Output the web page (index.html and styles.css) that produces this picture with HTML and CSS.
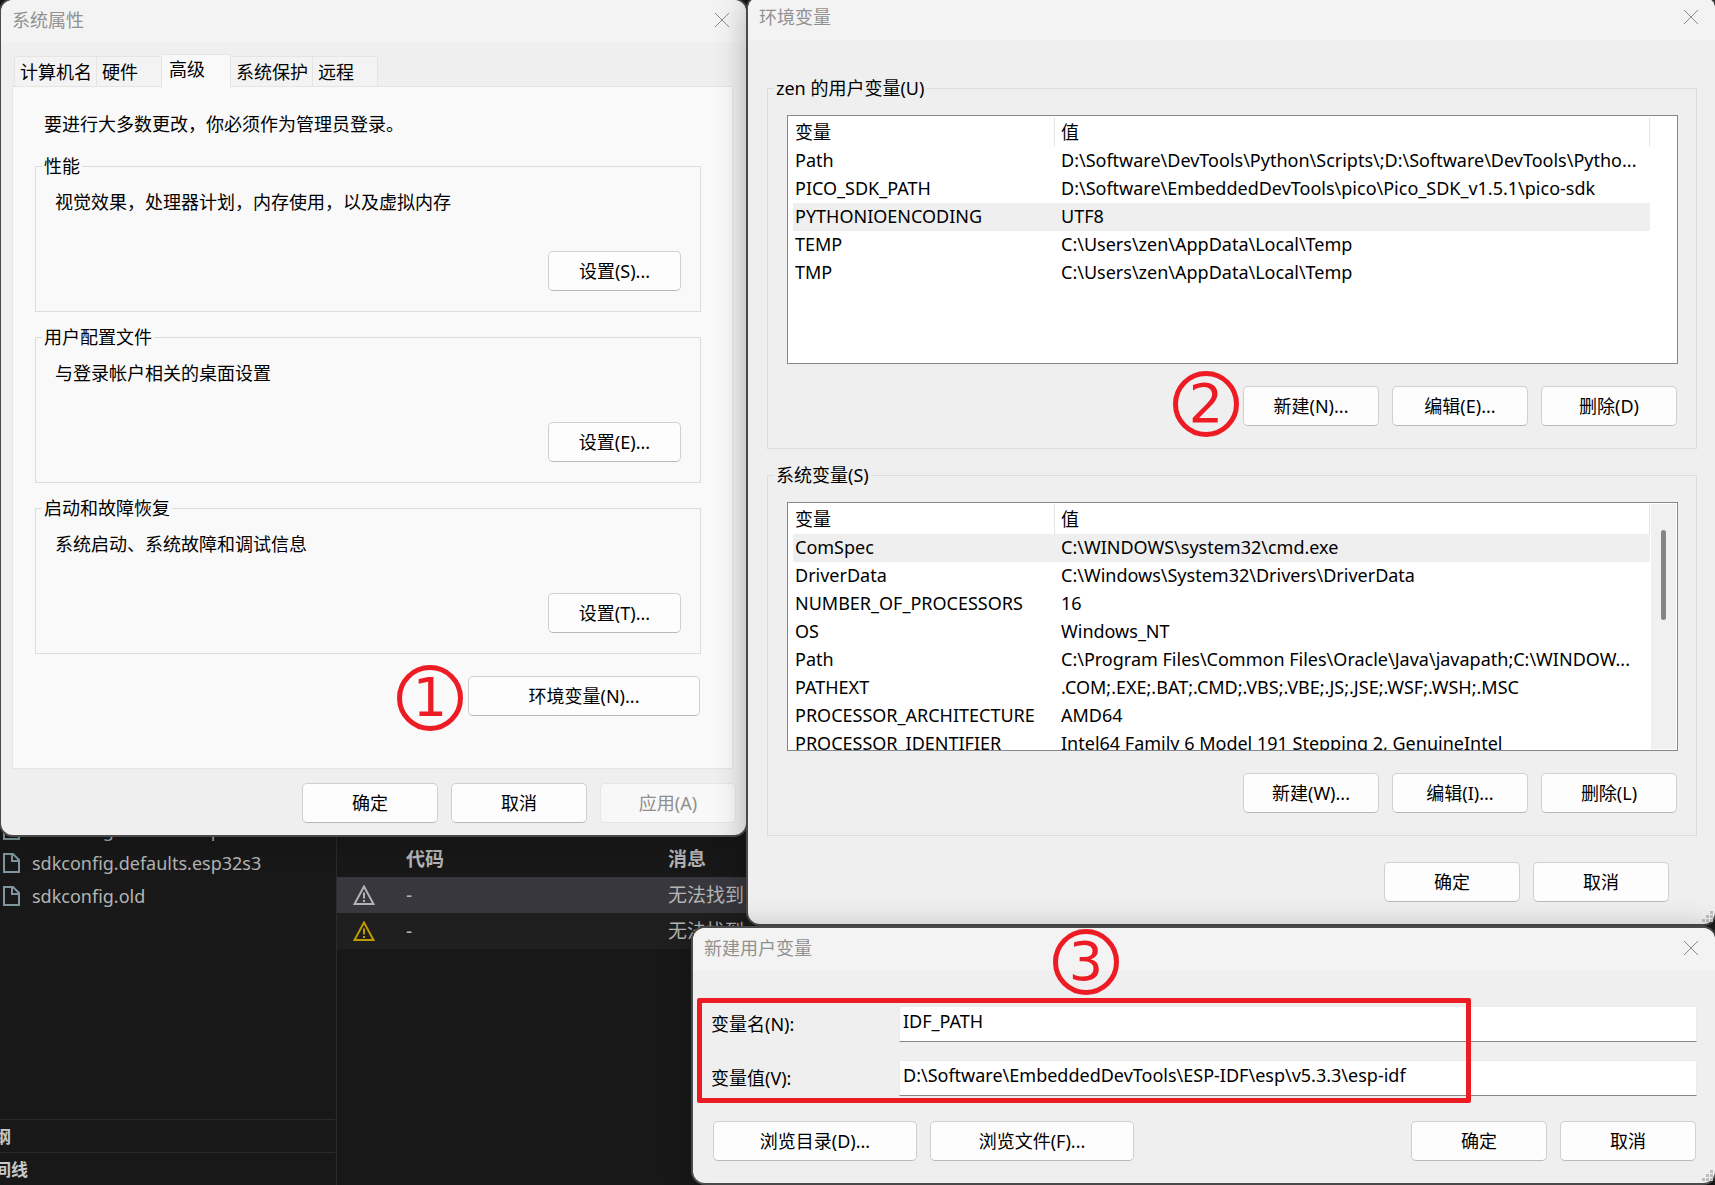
FILE: index.html
```
<!DOCTYPE html>
<html lang="zh-CN">
<head>
  <meta charset="UTF-8">
  <title>环境变量</title>
  <link rel="stylesheet" href="styles.css">
</head>
<body>
  <!-- 编辑器 -->
  <div class="editor">
    <div class="sidebar">
      <ul class="file-list">
        <li>
          <svg class="file-icon" viewBox="0 0 18 22"><path d="M2 2h9l6 6v12h-15zM10 2v7h7" /></svg>
          <span>sdkconfig.defaults.esp32s2</span>
        </li>
        <li>
          <svg class="file-icon" viewBox="0 0 18 22"><path d="M2 2h9l6 6v12h-15zM10 2v7h7" /></svg>
          <span>sdkconfig.defaults.esp32s3</span>
        </li>
        <li>
          <svg class="file-icon" viewBox="0 0 18 22"><path d="M2 2h9l6 6v12h-15zM10 2v7h7" /></svg>
          <span>sdkconfig.old</span>
        </li>
      </ul>
      <div class="section-title">大纲</div>
      <div class="section-title">时间线</div>
    </div>
    <div class="problems">
      <div class="problem-row problem-head">
        <span></span>
        <span>代码</span>
        <span>消息</span>
      </div>
      <div class="problem-row problem-active">
        <svg class="warn-icon" viewBox="0 0 22 20"><path d="M11 1.500L20.500 19h-19zM11 7.500v6M11 15v2" /></svg>
        <span>-</span>
        <span>无法找到</span>
      </div>
      <div class="problem-row problem-warn">
        <svg class="warn-icon" viewBox="0 0 22 20"><path d="M11 1.500L20.500 19h-19zM11 7.500v6M11 15v2" /></svg>
        <span>-</span>
        <span>无法找到</span>
      </div>
    </div>
  </div>

  <!-- 系统属性 -->
  <div class="window window-props">
    <div class="titlebar">
      <span>系统属性</span>
      <button class="close" aria-label="关闭"><svg viewBox="0 0 16 16"><path d="M1 1l14 14M15 1L1 15" /></svg></button>
    </div>
    <div class="tabs">
      <button class="tab">计算机名</button>
      <button class="tab">硬件</button>
      <button class="tab tab-active">高级</button>
      <button class="tab">系统保护</button>
      <button class="tab">远程</button>
    </div>
    <div class="tab-panel">
      <p class="tip">要进行大多数更改，你必须作为管理员登录。</p>
      <fieldset class="group setting">
        <legend>性能</legend>
        <p>视觉效果，处理器计划，内存使用，以及虚拟内存</p>
        <button class="btn btn-set">设置(S)...</button>
      </fieldset>
      <fieldset class="group setting">
        <legend>用户配置文件</legend>
        <p>与登录帐户相关的桌面设置</p>
        <button class="btn btn-set">设置(E)...</button>
      </fieldset>
      <fieldset class="group setting">
        <legend>启动和故障恢复</legend>
        <p>系统启动、系统故障和调试信息</p>
        <button class="btn btn-set">设置(T)...</button>
      </fieldset>
      <button class="btn btn-env">环境变量(N)...</button>
    </div>
    <div class="btn-row props-footer">
      <button class="btn">确定</button>
      <button class="btn">取消</button>
      <button class="btn" disabled>应用(A)</button>
    </div>
    <div class="badge badge-1">1</div>
  </div>

  <!-- 环境变量 -->
  <div class="window window-env">
    <div class="titlebar">
      <span>环境变量</span>
      <button class="close" aria-label="关闭"><svg viewBox="0 0 16 16"><path d="M1 1l14 14M15 1L1 15" /></svg></button>
    </div>
    <div class="env-body">
      <fieldset class="group vars">
        <legend>zen 的用户变量(U)</legend>
        <div class="list">
          <table>
            <thead>
              <tr><th class="col-name">变量</th><th>值</th></tr>
            </thead>
            <tbody>
              <tr><td>Path</td><td>D:\Software\DevTools\Python\Scripts\;D:\Software\DevTools\Pytho...</td></tr>
              <tr><td>PICO_SDK_PATH</td><td>D:\Software\EmbeddedDevTools\pico\Pico_SDK_v1.5.1\pico-sdk</td></tr>
              <tr class="selected"><td>PYTHONIOENCODING</td><td>UTF8</td></tr>
              <tr><td>TEMP</td><td>C:\Users\zen\AppData\Local\Temp</td></tr>
              <tr><td>TMP</td><td>C:\Users\zen\AppData\Local\Temp</td></tr>
            </tbody>
          </table>
        </div>
        <div class="btn-row">
          <button class="btn">新建(N)...</button>
          <button class="btn">编辑(E)...</button>
          <button class="btn">删除(D)</button>
        </div>
      </fieldset>
      <fieldset class="group vars">
        <legend>系统变量(S)</legend>
        <div class="list">
          <table>
            <thead>
              <tr><th class="col-name">变量</th><th>值</th></tr>
            </thead>
            <tbody>
              <tr class="selected"><td>ComSpec</td><td>C:\WINDOWS\system32\cmd.exe</td></tr>
              <tr><td>DriverData</td><td>C:\Windows\System32\Drivers\DriverData</td></tr>
              <tr><td>NUMBER_OF_PROCESSORS</td><td>16</td></tr>
              <tr><td>OS</td><td>Windows_NT</td></tr>
              <tr><td>Path</td><td>C:\Program Files\Common Files\Oracle\Java\javapath;C:\WINDOW...</td></tr>
              <tr><td>PATHEXT</td><td>.COM;.EXE;.BAT;.CMD;.VBS;.VBE;.JS;.JSE;.WSF;.WSH;.MSC</td></tr>
              <tr><td>PROCESSOR_ARCHITECTURE</td><td>AMD64</td></tr>
              <tr><td>PROCESSOR_IDENTIFIER</td><td>Intel64 Family 6 Model 191 Stepping 2, GenuineIntel</td></tr>
            </tbody>
          </table>
          <div class="scrollbar"><div class="thumb"></div></div>
        </div>
        <div class="btn-row">
          <button class="btn">新建(W)...</button>
          <button class="btn">编辑(I)...</button>
          <button class="btn">删除(L)</button>
        </div>
      </fieldset>
      <div class="btn-row env-footer">
        <button class="btn">确定</button>
        <button class="btn">取消</button>
      </div>
    </div>
    <svg class="grip" viewBox="0 0 12 12"><path d="M8 0h3v3h-3zM4 4h3v3h-3zM8 4h3v3h-3zM0 8h3v3h-3zM4 8h3v3h-3zM8 8h3v3h-3z" /></svg>
    <div class="badge badge-2">2</div>
  </div>

  <!-- 新建用户变量 -->
  <div class="window window-new">
    <div class="titlebar">
      <span>新建用户变量</span>
      <button class="close" aria-label="关闭"><svg viewBox="0 0 16 16"><path d="M1 1l14 14M15 1L1 15" /></svg></button>
    </div>
    <div class="form">
      <label for="var-name">变量名(N):</label>
      <input id="var-name" type="text" value="IDF_PATH">
      <label for="var-value">变量值(V):</label>
      <input id="var-value" type="text" value="D:\Software\EmbeddedDevTools\ESP-IDF\esp\v5.3.3\esp-idf">
    </div>
    <div class="btn-row new-footer">
      <button class="btn btn-wide">浏览目录(D)...</button>
      <button class="btn btn-wide">浏览文件(F)...</button>
      <span class="spacer"></span>
      <button class="btn">确定</button>
      <button class="btn">取消</button>
    </div>
    <svg class="grip" viewBox="0 0 12 12"><path d="M8 0h3v3h-3zM4 4h3v3h-3zM8 4h3v3h-3zM0 8h3v3h-3zM4 8h3v3h-3zM8 8h3v3h-3z" /></svg>
    <div class="mark-box"></div>
    <div class="badge badge-3">3</div>
  </div>
</body>
</html>
```
FILE: styles.css
```
* {
  box-sizing: border-box;
}
body {
  margin: 0;
  height: 100vh;
  position: relative;
  overflow: hidden;
  background: #181818;
  color: #000;
  font-family: 'Noto Sans', 'Noto Sans CJK SC', sans-serif;
  font-size: 18px;
  line-height: 24px;
}
p {
  margin: 0;
}
button, input {
  font: inherit;
  color: inherit;
}

/* 编辑器 */
.editor {
  display: flex;
  height: 100%;
  color: #b4b4b4;
}
.sidebar {
  width: 337px;
  display: flex;
  flex-direction: column;
  border-right: 1px solid #2b2b2b;
}
.file-list {
  flex: 1;
  margin: 0;
  padding: 813px 0 0 2px;
  list-style: none;
}
.file-list li {
  display: flex;
  align-items: center;
  gap: 12px;
  height: 33px;
}
.file-icon {
  width: 18px;
  height: 22px;
  fill: none;
  stroke: #7f959f;
  stroke-width: 2;
}
.section-title {
  height: 33px;
  margin-right: 1px;
  border-top: 1px solid #2b2b2b;
  line-height: 34px;
  font-size: 17px;
  font-weight: bold;
  text-indent: -23px;
  color: #c8c8c8;
}
.problems {
  flex: 1;
  padding-top: 841px;
}
.problem-row {
  display: grid;
  grid-template-columns: 53px 262px 1fr;
  align-items: center;
  height: 36px;
  padding-left: 16px;
  font-size: 19px;
}
.problem-head {
  font-weight: bold;
}
.problem-active {
  background: #37373d;
}
.problem-warn {
  background: #1f1f1f;
}
.warn-icon {
  width: 22px;
  height: 20px;
  fill: none;
  stroke: #b4b4b4;
  stroke-width: 2;
}
.problem-warn .warn-icon {
  stroke: #bf9a00;
}

/* 窗口 */
.window {
  position: absolute;
  background: #efefef;
  border-radius: 12px;
  box-shadow: 0 0 0 2px #4a4a4a, 0 4px 32px rgba(0,0,0,0.3);
}
.window-props {
  left: 1px;
  top: 0;
  width: 745px;
}
.window-env {
  left: 748px;
  right: 0;
  top: -3px;
}
.window-new {
  left: 693px;
  right: 0;
  top: 928px;
}
.titlebar {
  display: flex;
  align-items: center;
  justify-content: space-between;
  height: 43px;
  padding: 0 16px 3px 11px;
  background: #f3f3f3;
  border-radius: 12px 12px 0 0;
  color: #919191;
}
.close {
  display: flex;
  padding: 0;
  border: none;
  background: none;
}
.close svg {
  width: 16px;
  height: 16px;
  fill: none;
  stroke: #8a8a8a;
}

/* 按钮 */
.btn {
  width: 136px;
  height: 40px;
  padding: 0;
  border: 1px solid #d0d0d0;
  border-bottom-color: #b8b8b8;
  border-radius: 5px;
  background: #fdfdfd;
}
.btn:disabled {
  color: #8f8f8f;
  border-color: #e6e6e6;
  background: #f8f8f8;
}
.btn-set {
  width: 133px;
}
.btn-env {
  width: 232px;
}
.btn-wide {
  width: 204px;
}
.btn-row {
  display: flex;
  justify-content: flex-end;
  gap: 13px;
}

.group {
  min-width: 0;
  margin: 0;
  border: 1px solid #dcdcdc;
}
.group legend {
  margin-left: -13px;
  padding: 0 2px;
}

/* 选项卡 */
.tabs {
  display: flex;
  align-items: flex-end;
  padding: 11px 13px 0;
}
.tab {
  min-width: 65px;
  height: 30px;
  padding: 0 4px 0 5px;
  border: 1px solid #e5e5e5;
  border-bottom: none;
  border-left-width: 0;
  background: #f3f3f3;
  text-align: left;
}
.tab:first-child {
  border-left-width: 1px;
}
.tab-active {
  z-index: 1;
  width: 69px;
  height: 33px;
  margin-bottom: -1px;
  padding: 0 7px 4px;
  background: #f9f9f9;
}
.tab-panel {
  display: flex;
  flex-direction: column;
  margin: 0 13px 0 11px;
  padding: 25px 31px 51px 22px;
  border: 1px solid #e5e5e5;
  background: #f9f9f9;
}
.tip {
  padding-left: 9px;
  margin-bottom: 5px;
}
.setting {
  display: flex;
  flex-direction: column;
  margin-top: 13px;
  padding: 12px 19px 20px;
}
.setting .btn {
  align-self: flex-end;
  margin-top: 37px;
}
.btn-env {
  align-self: flex-end;
  margin: 22px 1px 1px 0;
}
.props-footer {
  padding: 14px 10px 12px;
}

/* 变量列表 */
.env-body {
  padding: 36px 18px 22px 19px;
}
.vars {
  margin-bottom: 14px;
  padding: 15px 18px 22px 19px;
}
.vars .btn-row {
  padding-right: 1px;
}
.list {
  display: flex;
  height: 249px;
  margin-bottom: 22px;
  padding: 1px 1px 1px 5px;
  border: 1px solid #828790;
  background: #fff;
  overflow: hidden;
}
.list table {
  width: calc(100% - 26px);
  table-layout: fixed;
  border-collapse: separate;
  border-spacing: 0;
  align-self: flex-start;
}
.list th {
  height: 30px;
  padding: 0 5px 0 6px;
  border-right: 1px solid #e5e5e5;
  font-weight: normal;
  text-align: left;
}
.list .col-name {
  width: 262px;
  padding-left: 2px;
}
.list td {
  height: 28px;
  padding: 0 0 2px 6px;
  white-space: nowrap;
}
.list td:first-child {
  padding-left: 2px;
}
.selected td {
  background: #efefef;
}
.scrollbar {
  width: 25px;
  margin-left: 1px;
  padding: 26px 10px 0;
  background: #f0f0f0;
}
.thumb {
  height: 90px;
  border-radius: 3px;
  background: #858585;
}
.env-footer {
  padding: 12px 28px 0 0;
}

/* 新建变量 */
.form {
  display: grid;
  grid-template-columns: 188px 1fr;
  gap: 18px 0;
  padding: 35px 18px 25px;
}
.form label {
  line-height: 36px;
}
.form input {
  width: 100%;
  height: 36px;
  padding: 0 3px 6px;
  border: 1px solid #ebebeb;
  border-bottom-color: #868686;
  background: #fff;
}
.new-footer {
  padding: 0 19px 22px 20px;
}
.spacer {
  flex: 1;
}

/* 右下角 */
.grip {
  position: absolute;
  right: 1px;
  bottom: 1px;
  width: 12px;
  height: 12px;
  fill: #bdbdbd;
}

/* 标注 */
.badge {
  position: absolute;
  width: 66px;
  height: 66px;
  border: 5px solid #ed1c24;
  border-radius: 50%;
  color: #ed1c24;
  font-family: 'DejaVu Sans', sans-serif;
  font-size: 54px;
  line-height: 56px;
  text-align: center;
}
.badge-1 {
  left: 396px;
  top: 665px;
}
.badge-2 {
  left: 425px;
  top: 374px;
}
.badge-3 {
  left: 360px;
  top: 1px;
}
.mark-box {
  position: absolute;
  left: 4px;
  top: 70px;
  width: 774px;
  height: 105px;
  border: 5px solid #ed1c24;
  border-radius: 2px;
  pointer-events: none;
}
```
